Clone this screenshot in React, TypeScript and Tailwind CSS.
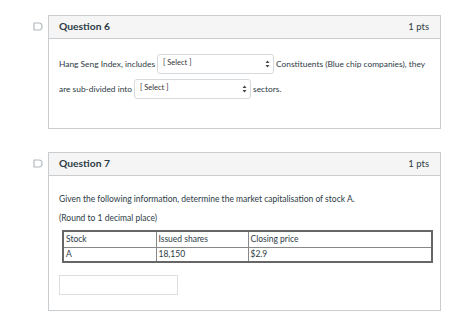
import React from 'react'

const font = { fontFamily: 'Lato, "Open Sans", sans-serif' }

function Flag() {
  return (
    <svg width="10" height="9" viewBox="0 0 10 9" className="mt-[7px] shrink-0">
      <path
        d="M1 1 H6 C7.7 1 9 2.6 9 4.5 C9 6.4 7.7 8 6 8 H1 Z"
        fill="none"
        stroke="#b3b9bd"
        strokeWidth="1.2"
        strokeLinejoin="round"
      />
    </svg>
  )
}

function Select() {
  return (
    <span className="mx-[2px] inline-flex h-[20px] w-[117px] shrink-0 items-center justify-between rounded-[3px] border border-[#d7dadd] bg-white pl-[5px] pr-[3px]">
      <span className="mb-[2px] text-[7.5px] leading-none text-[#333]">[ Select ]</span>
      <svg width="5" height="8" viewBox="0 0 5 8">
        <path d="M2.5 0.5 L4.5 3 H0.5 Z M2.5 7.5 L4.5 5 H0.5 Z" fill="#444" />
      </svg>
    </span>
  )
}

function Card({ title, children, bodyClass }: { title: string; children: React.ReactNode; bodyClass: string }) {
  return (
    <div className="flex gap-[5px]">
      <Flag />
      <div className="w-[393px] border border-[#c9cdd0]">
        <div className="flex h-[23px] items-center justify-between border-b border-[#c9cdd0] bg-[#f5f5f5] pl-[10px] pr-[11px]">
          <span className="text-[10.3px] font-bold text-[#2d3b45]">{title}</span>
          <span className="text-[9.5px] text-[#2d3b45]">1 pts</span>
        </div>
        <div className={bodyClass}>{children}</div>
      </div>
    </div>
  )
}

export default function App() {
  return (
    <div className="min-h-[322px] bg-white pl-[33px] pt-[15px] text-[#2d3b45]" style={font}>
      <div className="flex flex-col gap-[23px]">
        <Card title="Question 6" bodyClass="h-[89px] pl-[10px] pt-[15px] text-[8.4px] whitespace-nowrap">
          <div className="flex h-[20px] items-center">
            <span>Hang Seng Index, includes</span>
            <Select />
            <span>Constituents (Blue chip companies), they</span>
          </div>
          <div className="mt-[5px] flex h-[20px] items-center">
            <span>are sub-divided into</span>
            <Select />
            <span>sectors.</span>
          </div>
        </Card>
        <Card title="Question 7" bodyClass="h-[134px] pl-[10px] pt-[17px] text-[8.5px]">
          <p className="leading-[12px]">Given the following information, determine the market capitalisation of stock A.</p>
          <p className="mt-[7px] leading-[12px]">(Round to 1 decimal place)</p>
          <table className="mt-[6px] ml-[3px] w-[371px] border-collapse border-2 border-[#666] text-[8.5px]">
            <tbody>
              <tr className="h-[16px]">
                <td className="w-[93px] border border-[#888] pl-[2px]">Stock</td>
                <td className="w-[92px] border border-[#888] pl-[2px]">Issued shares</td>
                <td className="border border-[#888] pl-[2px]">Closing price</td>
              </tr>
              <tr className="h-[15px]">
                <td className="border border-[#888] pl-[2px]">A</td>
                <td className="border border-[#888] pl-[2px]">18,150</td>
                <td className="border border-[#888] pl-[2px]">$2.9</td>
              </tr>
            </tbody>
          </table>
          <div className="mt-[12px] h-[20px] w-[119px] border border-[#dcdfe1]" />
        </Card>
      </div>
    </div>
  )
}
